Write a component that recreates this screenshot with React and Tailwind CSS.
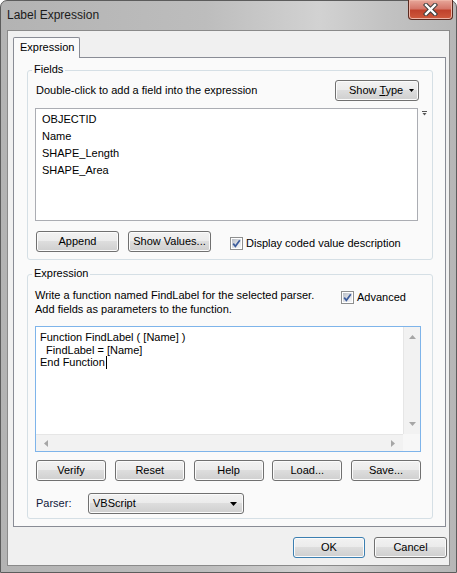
import React from "react";

const FONT = "font-['Liberation_Sans',Arial,sans-serif]";
const BTN =
  "flex h-[21px] items-center justify-center rounded-[3px] border border-[#707070] bg-[linear-gradient(to_bottom,#f2f2f2_0%,#ebebeb_49%,#dddddd_50%,#cfcfcf_100%)] shadow-[inset_0_0_0_1px_#fbfbfb] text-[11px] text-black";

function Check({ label, className = "" }) {
  return (
    <div className={`flex items-center ${className}`}>
      <div className="flex h-[13px] w-[13px] items-center justify-center border border-[#8e8f8f] bg-white">
        <div className="relative h-[9px] w-[9px] bg-[linear-gradient(135deg,#b9bec6_0%,#e3e5e9_60%,#f7f7f7_100%)]">
          <svg width="11" height="11" viewBox="0 0 11 11" className="absolute left-[-1px] top-[-1px]">
            <path d="M2.2 5.6 L4.4 8.3 L8.8 2.2" fill="none" stroke="#3c5c9c" strokeWidth="1.7" />
          </svg>
        </div>
      </div>
      <span className="ml-[3px] text-[11px] leading-[13px] text-black">{label}</span>
    </div>
  );
}

function Arrow({ dir, className = "" }) {
  const d = {
    up: "M0 4 L3.5 0 L7 4 Z",
    down: "M0 0 L7 0 L3.5 4 Z",
  };
  if (dir === "left" || dir === "right") {
    return (
      <svg width="4" height="7" viewBox="0 0 4 7" className={className}>
        <path d={dir === "left" ? "M4 0 L0 3.5 L4 7 Z" : "M0 0 L4 3.5 L0 7 Z"} fill="#a6a6a6" />
      </svg>
    );
  }
  return (
    <svg width="7" height="4" viewBox="0 0 7 4" className={className}>
      <path d={d[dir]} fill="#a6a6a6" />
    </svg>
  );
}

function GroupBox({ label, className, children }) {
  return (
    <div className={`relative rounded-[3px] border border-[#d5dfe5] ${className}`}>
      <span className="absolute left-[4px] top-[-8px] bg-[#fafafa] px-[2px] text-[11px] leading-[13px] text-black">
        {label}
      </span>
      {children}
    </div>
  );
}

export default function App() {
  return (
    <div className={`${FONT} h-[573px] w-[457px] overflow-hidden bg-white`}>
      <div className="flex h-[573px] w-[457px] flex-col rounded-t-[7px] border border-[#5c5c5c] bg-[linear-gradient(to_right,#b3b3b3_0%,#bdbdbd_45%,#d2d2d2_70%,#c2c2c2_85%,#b6b6b6_100%)] px-[6px] pb-[6px]">
        {/* title bar */}
        <div className="flex h-[29px] shrink-0 items-start">
          <span className="mt-[7px] text-[12px] leading-[15px] text-[#1b1b1b]">Label Expression</span>
          <div className="ml-auto mr-[-3px] mt-[-1px] flex h-[20px] w-[45px] items-center justify-center rounded-b-[4px] border border-t-0 border-[#5a2a20] bg-[linear-gradient(to_bottom,#e7a79a_0%,#d5776a_45%,#c0422c_55%,#cf5a3d_100%)] shadow-[inset_0_0_0_1px_#eeb4a6]">
            <svg width="15" height="13" viewBox="0 0 15 13">
              <path d="M3 2 L12 11 M12 2 L3 11" stroke="#3a3a3a" strokeWidth="4.4" strokeLinecap="square" />
              <path d="M3 2 L12 11 M12 2 L3 11" stroke="#ffffff" strokeWidth="2.4" strokeLinecap="square" />
            </svg>
          </div>
        </div>

        {/* client area */}
        <div className="flex flex-1 flex-col border border-[#8a8a8a] bg-[#f0f0f0]">
          {/* tab strip */}
          <div className="relative z-10 mb-[-1px] ml-[5px] mt-[6px] flex">
            <div className="h-[21px] w-[67px] rounded-t-[2px] border border-b-0 border-[#898c95] bg-[#fafafa] pl-[6px] pt-[3px] text-[11px] leading-[13px] text-black">
              Expression
            </div>
          </div>

          {/* tab panel */}
          <div className="ml-[5px] h-[470px] w-[433px] border border-[#898c95] bg-[#fafafa]">
            {/* Fields */}
            <GroupBox label="Fields" className="ml-[13px] mt-[12px] h-[190px] w-[406px]">
              <div className="mt-[9px] flex h-[20px] items-center">
                <span className="ml-[8px] text-[11px] leading-[13px] text-black">
                  Double-click to add a field into the expression
                </span>
                <div className={`${BTN} ml-auto mr-[13px] w-[84px] !justify-start gap-[6px] pl-[13px]`}>
                  <span>
                    Show <span className="underline">T</span>ype
                  </span>
                  <svg width="5" height="3" viewBox="0 0 5 3">
                    <path d="M0 0 L5 0 L2.5 3 Z" fill="#000" />
                  </svg>
                </div>
              </div>
              <div className="mt-[8px] flex items-start">
                <div className="ml-[7px] h-[113px] w-[383px] border border-[#abadb3] bg-white pl-[6px] pt-[2px] text-[11px] leading-[17px] text-black">
                  <div>OBJECTID</div>
                  <div>Name</div>
                  <div>SHAPE_Length</div>
                  <div>SHAPE_Area</div>
                </div>
                <svg width="5" height="5" viewBox="0 0 5 5" className="ml-[4px] mt-[3px]">
                  <path d="M0 0.5 H5" stroke="#555" strokeWidth="1" />
                  <path d="M0.5 2 L4.5 2 L2.5 4.5 Z" fill="#555" />
                </svg>
              </div>
              <div className="mt-[10px] flex items-center">
                <div className={`${BTN} ml-[8px] w-[83px]`}>Append</div>
                <div className={`${BTN} ml-[9px] w-[83px]`}>Show Values...</div>
                <Check label="Display coded value description" className="ml-[19px] mt-[3px]" />
              </div>
            </GroupBox>

            {/* Expression */}
            <GroupBox label="Expression" className="ml-[13px] mt-[14px] h-[245px] w-[406px]">
              <div className="mt-[13px] flex items-start">
                <div className="ml-[7px] w-[306px] text-[11px] leading-[14px] text-black">
                  <div>Write a function named FindLabel for the selected parser.</div>
                  <div>Add fields as parameters to the function.</div>
                </div>
                <Check label="Advanced" className="mt-[3px]" />
              </div>

              <div className="ml-[7px] mt-[10px] grid h-[126px] w-[386px] grid-cols-[1fr_17px] grid-rows-[1fr_17px] border border-[#7eb4ea] bg-white">
                <div className="pl-[4px] pt-[4px] text-[11px] leading-[12.5px] text-black">
                  <div>Function FindLabel ( [Name] )</div>
                  <div>&nbsp; FindLabel = [Name]</div>
                  <div className="flex items-center">
                    End Function
                    <span className="ml-[1px] inline-block h-[13px] w-[1px] bg-black" />
                  </div>
                </div>
                <div className="flex flex-col items-center justify-between border-l border-[#e6e6e6] bg-[#f2f2f2] py-[8px]">
                  <Arrow dir="up" />
                  <Arrow dir="down" />
                </div>
                <div className="flex items-center justify-between border-t border-[#e6e6e6] bg-[#f2f2f2] px-[8px]">
                  <Arrow dir="left" />
                  <Arrow dir="right" />
                </div>
                <div className="bg-[#f7f7f7]" />
              </div>

              <div className="ml-[8px] mt-[8px] flex w-[385px] justify-between">
                <div className={`${BTN} w-[70px]`}>Verify</div>
                <div className={`${BTN} w-[70px]`}>Reset</div>
                <div className={`${BTN} w-[70px]`}>Help</div>
                <div className={`${BTN} w-[70px]`}>Load...</div>
                <div className={`${BTN} w-[70px]`}>Save...</div>
              </div>

              <div className="mt-[12px] flex items-center">
                <span className="ml-[8px] w-[52px] text-[11px] leading-[13px] text-[#10203a]">Parser:</span>
                <div className={`${BTN} w-[156px] !justify-start pl-[4px] pr-[6px]`}>
                  <span>VBScript</span>
                  <svg width="7" height="4" viewBox="0 0 7 4" className="ml-auto">
                    <path d="M0 0 L7 0 L3.5 4 Z" fill="#000" />
                  </svg>
                </div>
              </div>
            </GroupBox>
          </div>

          {/* OK / Cancel */}
          <div className="mr-[2px] mt-[10px] flex justify-end gap-[9px]">
            <div className={`${BTN} w-[72px] !border-[#3c7fb1] shadow-[inset_0_0_0_1px_#a8dcf7]`}>OK</div>
            <div className={`${BTN} w-[73px]`}>Cancel</div>
          </div>
        </div>
      </div>
    </div>
  );
}
